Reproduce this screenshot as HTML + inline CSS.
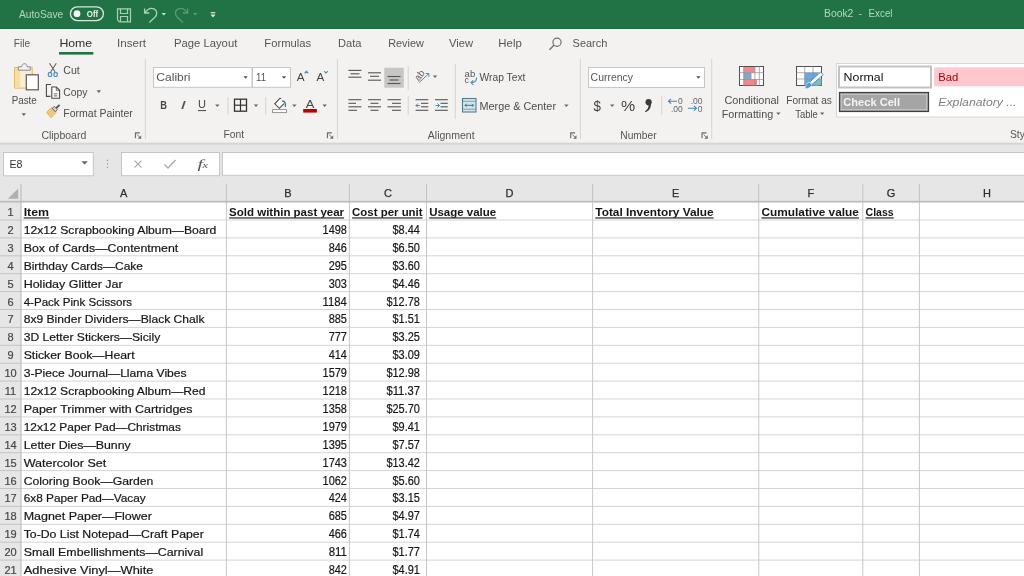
<!DOCTYPE html>
<html><head><meta charset="utf-8"><title>Book2 - Excel</title>
<style>html,body{margin:0;padding:0;width:1024px;height:576px;overflow:hidden;background:#fff}
svg{display:block;will-change:transform;font-family:"Liberation Sans",sans-serif}</style></head>
<body><svg width="1024" height="576" viewBox="0 0 1024 576">
<rect x="0" y="0" width="1024" height="576" fill="#ffffff"/>
<rect x="0" y="0" width="1024" height="29" fill="#217346"/>
<rect x="0" y="27.9" width="1024" height="1.1" fill="#1e6a40"/>
<rect x="0" y="29" width="1024" height="1.1" fill="#e6f2ea"/>
<rect x="0" y="30.1" width="1024" height="112.6" fill="#f3f2f1"/>
<rect x="0" y="142.7" width="1024" height="59.4" fill="#e6e6e6"/>
<rect x="0" y="142.7" width="1024" height="1.2" fill="#d2d2d2"/>
<rect x="0" y="143.9" width="1024" height="1.2" fill="#dcdcdc"/>
<text x="19" y="17.6" font-size="10.6" fill="#b3d8bd" textLength="44.3" lengthAdjust="spacingAndGlyphs">AutoSave</text>
<rect x="70.4" y="6.8" width="33" height="13.8" fill="none" stroke="#d5e9db" stroke-width="1.3" rx="6.9"/>
<circle cx="77" cy="13.7" r="3.4" fill="#eef7f1"/>
<text x="86.8" y="16.9" font-size="9" fill="#e6f3ea" font-weight="bold" textLength="11.4" lengthAdjust="spacingAndGlyphs">Off</text>
<path d="M117.5 8.8H130.5V21.8H119.5L117.5 19.8Z" fill="none" stroke="#a8d2b5" stroke-width="1.2"/>
<path d="M120.5 8.8V13.5H127.5V8.8" fill="none" stroke="#a8d2b5" stroke-width="1.2"/>
<path d="M120.5 21.8V16.5H127.5V21.8" fill="none" stroke="#a8d2b5" stroke-width="1.2"/>
<path d="M144.6 8.6V13H149.3M145.1 12.6C147.3 9.2 150.8 7.6 153.8 8.8C157.5 10.4 157.6 14.6 154.6 17.6L149.3 22.4" fill="none" stroke="#a8d2b5" stroke-width="1.3"/>
<path d="M161.6 13L166 13L163.8 15.6Z" fill="#d8ecdf"/>
<path d="M187.6 8.6V13H182.9M187.1 12.6C184.9 9.2 181.4 7.6 178.4 8.8C174.7 10.4 174.6 14.6 177.6 17.6L182.9 22.4" fill="none" stroke="#5a9c72" stroke-width="1.3"/>
<path d="M193 13L197.4 13L195.2 15.6Z" fill="#5f9e76"/>
<rect x="210.7" y="12.1" width="4.6" height="1.2" fill="#d8ecdf"/>
<path d="M210.5 14.6L215.5 14.6L213 17.6Z" fill="#d8ecdf"/>
<text x="824" y="17" font-size="10.6" fill="#b3d8bd" textLength="29.3" lengthAdjust="spacingAndGlyphs">Book2</text>
<text x="858.8" y="17" font-size="10.6" fill="#b3d8bd" textLength="3.2" lengthAdjust="spacingAndGlyphs">-</text>
<text x="868.6" y="17" font-size="10.6" fill="#b3d8bd" textLength="23.9" lengthAdjust="spacingAndGlyphs">Excel</text>
<text x="13.75" y="47" font-size="11.5" fill="#555555" textLength="16.25" lengthAdjust="spacingAndGlyphs">File</text>
<text x="59.4" y="47" font-size="11.5" fill="#303030" textLength="32.8" lengthAdjust="spacingAndGlyphs">Home</text>
<text x="117" y="47" font-size="11.5" fill="#555555" textLength="29" lengthAdjust="spacingAndGlyphs">Insert</text>
<text x="174" y="47" font-size="11.5" fill="#555555" textLength="63.3" lengthAdjust="spacingAndGlyphs">Page Layout</text>
<text x="264.3" y="47" font-size="11.5" fill="#555555" textLength="46.9" lengthAdjust="spacingAndGlyphs">Formulas</text>
<text x="338" y="47" font-size="11.5" fill="#555555" textLength="23.5" lengthAdjust="spacingAndGlyphs">Data</text>
<text x="388.2" y="47" font-size="11.5" fill="#555555" textLength="35.6" lengthAdjust="spacingAndGlyphs">Review</text>
<text x="449" y="47" font-size="11.5" fill="#555555" textLength="24" lengthAdjust="spacingAndGlyphs">View</text>
<text x="498.3" y="47" font-size="11.5" fill="#555555" textLength="23.5" lengthAdjust="spacingAndGlyphs">Help</text>
<text x="572.6" y="47" font-size="11.5" fill="#555555" textLength="34.7" lengthAdjust="spacingAndGlyphs">Search</text>
<rect x="59" y="52" width="34.3" height="2.6" fill="#217346"/>
<circle cx="557" cy="42.2" r="4.1" fill="none" stroke="#707070" stroke-width="1.2"/>
<line x1="554.1" y1="45.1" x2="549.5" y2="49.7" stroke="#707070" stroke-width="1.4"/>
<path d="M14.6 67.4H32.2V88.1H14.6Z" fill="#fbeed0" stroke="#dcb45e" stroke-width="1"/>
<rect x="15.2" y="68" width="5" height="19.5" fill="#f5dfa6"/>
<path d="M18.3 70.2V66.8H21.6C21.8 64.9 22.8 63.7 24.4 63.7C26 63.7 27 64.9 27.2 66.8H30.3V70.2Z" fill="#f3f2f1" stroke="#8a8a8a" stroke-width="1"/>
<rect x="26.3" y="74.8" width="12" height="15" fill="#ffffff" stroke="#595959" stroke-width="1.2"/>
<text x="11.7" y="103.7" font-size="10.3" fill="#4d4d4d" textLength="25" lengthAdjust="spacingAndGlyphs">Paste</text>
<path d="M21.6 113.3L26 113.3L23.8 115.9Z" fill="#666"/>
<path d="M49.5 63.3L55 71.8M56.3 63.3L50.8 71.8" fill="none" stroke="#606060" stroke-width="1.1"/>
<ellipse cx="50" cy="74.4" rx="1.7" ry="2.1" fill="none" stroke="#4a90c8" stroke-width="1.2"/>
<ellipse cx="55.6" cy="74.4" rx="1.7" ry="2.1" fill="none" stroke="#4a90c8" stroke-width="1.2"/>
<text x="63.3" y="74.4" font-size="10.3" fill="#4d4d4d" textLength="16.4" lengthAdjust="spacingAndGlyphs">Cut</text>
<path d="M51 84.5H46.4V96.4H50.5" fill="none" stroke="#4a4a4a" stroke-width="1.1"/>
<path d="M51.8 87H56.3L59.6 90.3V98.2H51.8Z" fill="#ffffff" stroke="#4a4a4a" stroke-width="1.1"/>
<path d="M56.3 87V90.3H59.6" fill="none" stroke="#4a4a4a" stroke-width="0.8"/>
<line x1="53.8" y1="93.9" x2="57.3" y2="93.9" stroke="#555" stroke-width="0.9"/>
<line x1="53.8" y1="95.9" x2="57.3" y2="95.9" stroke="#555" stroke-width="0.9"/>
<text x="63.3" y="95.8" font-size="10.3" fill="#4d4d4d" textLength="24.2" lengthAdjust="spacingAndGlyphs">Copy</text>
<path d="M96.6 90.3L101 90.3L98.8 92.9Z" fill="#666"/>
<path d="M46.4 112.2L51.7 107.6L56 112.6L51 117.6Z" fill="#f3cf8e" stroke="#d9a24e" stroke-width="0.8"/>
<path d="M48.2 113.9L52.8 109.6M49.6 115.6L54.3 111.1" fill="none" stroke="#d9a24e" stroke-width="0.6"/>
<path d="M52.2 108.2L54.4 106.4L57.3 109.6L55.5 111.9Z" fill="#d8d8d8" stroke="#5a5a5a" stroke-width="0.9"/>
<path d="M56 108.2L59.6 105" fill="none" stroke="#5a5a5a" stroke-width="1.9"/>
<text x="63.3" y="117" font-size="10.3" fill="#4d4d4d" textLength="69.5" lengthAdjust="spacingAndGlyphs">Format Painter</text>
<text x="41.4" y="138.8" font-size="10.3" fill="#555" textLength="44.85" lengthAdjust="spacingAndGlyphs">Clipboard</text>
<path d="M135.4 138.3V132.9M134.9 132.9H139.8" fill="none" stroke="#6a6a6a" stroke-width="1.1"/>
<path d="M137 134.5L139.8 137.3" fill="none" stroke="#6a6a6a" stroke-width="0.9"/>
<path d="M141.2 135.3V138.7H137.8Z" fill="#6a6a6a"/>
<line x1="145.3" y1="59" x2="145.3" y2="139" stroke="#d4d4d4" stroke-width="1"/>
<rect x="153.5" y="67.5" width="98.5" height="19.8" fill="#ffffff" stroke="#c6c6c6" stroke-width="1"/>
<rect x="252.5" y="67.5" width="38" height="19.8" fill="#ffffff" stroke="#c6c6c6" stroke-width="1"/>
<text x="156.3" y="81.4" font-size="10.8" fill="#555" textLength="34.2" lengthAdjust="spacingAndGlyphs">Calibri</text>
<path d="M243.4 76.2L247.8 76.2L245.6 78.8Z" fill="#555"/>
<text x="256" y="81.4" font-size="10.8" fill="#555" textLength="10" lengthAdjust="spacingAndGlyphs">11</text>
<path d="M281.8 76.2L286.2 76.2L284 78.8Z" fill="#555"/>
<text x="296.8" y="81.2" font-size="11.2" fill="#444" textLength="7.8" lengthAdjust="spacingAndGlyphs">A</text>
<path d="M304.6 73.3L306.4 71.1L308.2 73.3" fill="none" stroke="#5b8fa8" stroke-width="1.2"/>
<text x="316.5" y="81.2" font-size="11.2" fill="#444" textLength="7.8" lengthAdjust="spacingAndGlyphs">A</text>
<path d="M324.2 71.1L326 73.2L327.8 71.1" fill="none" stroke="#5b8fa8" stroke-width="1.2"/>
<text x="160.2" y="109.3" font-size="11.5" fill="#444" font-weight="bold" textLength="6.7" lengthAdjust="spacingAndGlyphs">B</text>
<text x="180.5" y="109.3" font-size="11.5" fill="#555" font-style="italic" textLength="5.5" lengthAdjust="spacingAndGlyphs">I</text>
<text x="198" y="108.3" font-size="10.5" fill="#444" textLength="8" lengthAdjust="spacingAndGlyphs">U</text>
<line x1="198" y1="110.6" x2="206" y2="110.6" stroke="#444" stroke-width="1"/>
<path d="M215.1 104.5L219.5 104.5L217.3 107.1Z" fill="#666"/>
<line x1="228" y1="97" x2="228" y2="114.6" stroke="#d4d4d4" stroke-width="1"/>
<rect x="234.5" y="99.2" width="12" height="12" fill="none" stroke="#333" stroke-width="1.3"/>
<line x1="240.5" y1="99.2" x2="240.5" y2="111.2" stroke="#333" stroke-width="1.2"/>
<line x1="234.5" y1="105.2" x2="246.5" y2="105.2" stroke="#333" stroke-width="1.2"/>
<path d="M253.8 104.5L258.2 104.5L256 107.1Z" fill="#666"/>
<line x1="265.7" y1="97" x2="265.7" y2="114.6" stroke="#d4d4d4" stroke-width="1"/>
<path d="M281.2 98.8L279.8 98.3L274.8 103.8L279.4 108.3L284 103.6" fill="#fafafa" stroke="#4a4a4a" stroke-width="1.1"/>
<path d="M282.2 101C284.6 100.8 286 103.2 285.3 106.8" fill="none" stroke="#3a6f85" stroke-width="1.3"/>
<rect x="272.6" y="109.6" width="13.9" height="3" fill="#ffffff" stroke="#8a8a8a" stroke-width="0.9"/>
<path d="M292.2 104.5L296.6 104.5L294.4 107.1Z" fill="#666"/>
<text x="305.8" y="107.6" font-size="11.6" fill="#4a4a4a" textLength="8.6" lengthAdjust="spacingAndGlyphs">A</text>
<rect x="303.2" y="109" width="13.7" height="3.6" fill="#c00000"/>
<path d="M322.5 104.5L326.9 104.5L324.7 107.1Z" fill="#666"/>
<text x="223.5" y="138.4" font-size="10.3" fill="#555" textLength="20.7" lengthAdjust="spacingAndGlyphs">Font</text>
<path d="M327.4 138.3V132.9M326.9 132.9H331.8" fill="none" stroke="#6a6a6a" stroke-width="1.1"/>
<path d="M329 134.5L331.8 137.3" fill="none" stroke="#6a6a6a" stroke-width="0.9"/>
<path d="M333.2 135.3V138.7H329.8Z" fill="#6a6a6a"/>
<line x1="337.4" y1="59" x2="337.4" y2="139" stroke="#d4d4d4" stroke-width="1"/>
<line x1="348.4" y1="70.4" x2="361.4" y2="70.4" stroke="#555" stroke-width="1.1"/>
<line x1="350.5" y1="73.8" x2="359.5" y2="73.8" stroke="#555" stroke-width="1.1"/>
<line x1="348.4" y1="77.2" x2="361.4" y2="77.2" stroke="#555" stroke-width="1.1"/>
<line x1="368" y1="72.8" x2="381" y2="72.8" stroke="#555" stroke-width="1.1"/>
<line x1="370" y1="76.3" x2="379" y2="76.3" stroke="#555" stroke-width="1.1"/>
<line x1="368" y1="80.2" x2="381" y2="80.2" stroke="#555" stroke-width="1.1"/>
<rect x="384.3" y="67.7" width="19.5" height="20" fill="#c8c6c4"/>
<line x1="387.5" y1="76.5" x2="400.5" y2="76.5" stroke="#555" stroke-width="1.1"/>
<line x1="389.5" y1="80" x2="398.5" y2="80" stroke="#555" stroke-width="1.1"/>
<line x1="387.5" y1="83.5" x2="400.5" y2="83.5" stroke="#555" stroke-width="1.1"/>
<line x1="408.2" y1="66" x2="408.2" y2="90" stroke="#d4d4d4" stroke-width="1"/>
<text x="413.3" y="79.2" font-size="9.5" fill="#555" transform="rotate(-52 418.3 74.7)">ab</text>
<path d="M419.2 82.5L428.8 73.6M425.6 73.5H428.9V76.8" fill="none" stroke="#4a8fb8" stroke-width="1"/>
<path d="M432.8 75.5L437.2 75.5L435 78.1Z" fill="#666"/>
<line x1="455.3" y1="64" x2="455.3" y2="119" stroke="#d4d4d4" stroke-width="1"/>
<text x="464.6" y="76.7" font-size="9.5" fill="#555" textLength="10.6" lengthAdjust="spacingAndGlyphs">ab</text>
<text x="464.6" y="83" font-size="9.5" fill="#555" textLength="4.4" lengthAdjust="spacingAndGlyphs">c</text>
<path d="M476.5 77.5C476.8 80.5 475 82.6 471.2 82.6M473.3 80.4L471 82.6L473.3 84.8" fill="none" stroke="#4a8fb8" stroke-width="1.1"/>
<text x="479.5" y="81.2" font-size="10.3" fill="#4d4d4d" textLength="45.9" lengthAdjust="spacingAndGlyphs">Wrap Text</text>
<line x1="348.4" y1="99.7" x2="361.4" y2="99.7" stroke="#555" stroke-width="1.1"/>
<line x1="348.4" y1="103.3" x2="356" y2="103.3" stroke="#555" stroke-width="1.1"/>
<line x1="348.4" y1="106.8" x2="361.4" y2="106.8" stroke="#555" stroke-width="1.1"/>
<line x1="348.4" y1="110.3" x2="357" y2="110.3" stroke="#555" stroke-width="1.1"/>
<line x1="368" y1="99.7" x2="381" y2="99.7" stroke="#555" stroke-width="1.1"/>
<line x1="370.5" y1="103.3" x2="378.5" y2="103.3" stroke="#555" stroke-width="1.1"/>
<line x1="368" y1="106.8" x2="381" y2="106.8" stroke="#555" stroke-width="1.1"/>
<line x1="370.5" y1="110.3" x2="378.5" y2="110.3" stroke="#555" stroke-width="1.1"/>
<line x1="387.5" y1="99.7" x2="400.9" y2="99.7" stroke="#555" stroke-width="1.1"/>
<line x1="392" y1="103.3" x2="400.9" y2="103.3" stroke="#555" stroke-width="1.1"/>
<line x1="387.5" y1="106.8" x2="400.9" y2="106.8" stroke="#555" stroke-width="1.1"/>
<line x1="392" y1="110.3" x2="400.9" y2="110.3" stroke="#555" stroke-width="1.1"/>
<line x1="408.2" y1="96" x2="408.2" y2="115" stroke="#d4d4d4" stroke-width="1"/>
<line x1="415.6" y1="99.7" x2="428.3" y2="99.7" stroke="#555" stroke-width="1.1"/>
<line x1="421" y1="103.3" x2="428.3" y2="103.3" stroke="#555" stroke-width="1.1"/>
<line x1="421" y1="106.8" x2="428.3" y2="106.8" stroke="#555" stroke-width="1.1"/>
<line x1="415.6" y1="110.3" x2="428.3" y2="110.3" stroke="#555" stroke-width="1.1"/>
<path d="M420 105.5H416M418 103.5L416 105.5L418 107.5" fill="none" stroke="#3c8bc4" stroke-width="1"/>
<line x1="435" y1="99.7" x2="447.8" y2="99.7" stroke="#555" stroke-width="1.1"/>
<line x1="440.5" y1="103.3" x2="447.8" y2="103.3" stroke="#555" stroke-width="1.1"/>
<line x1="440.5" y1="106.8" x2="447.8" y2="106.8" stroke="#555" stroke-width="1.1"/>
<line x1="435" y1="110.3" x2="447.8" y2="110.3" stroke="#555" stroke-width="1.1"/>
<path d="M435.5 105.5H439.5M437.5 103.5L439.5 105.5L437.5 107.5" fill="none" stroke="#3c8bc4" stroke-width="1"/>
<rect x="462.5" y="98.5" width="13.5" height="13.5" fill="#cfe6ee" stroke="#587c86" stroke-width="1.1"/>
<line x1="462.5" y1="101.3" x2="476" y2="101.3" stroke="#6f8f98" stroke-width="0.8"/>
<line x1="462.5" y1="109.2" x2="476" y2="109.2" stroke="#6f8f98" stroke-width="0.8"/>
<path d="M465 105.3H473.5M466.5 103.8L465 105.3L466.5 106.8M472 103.8L473.5 105.3L472 106.8" fill="none" stroke="#3a7587" stroke-width="1"/>
<text x="479.5" y="110.2" font-size="10.3" fill="#4d4d4d" textLength="76.5" lengthAdjust="spacingAndGlyphs">Merge &amp; Center</text>
<path d="M564.2 104.5L568.6 104.5L566.4 107.1Z" fill="#666"/>
<text x="427.8" y="138.6" font-size="10.3" fill="#555" textLength="46.8" lengthAdjust="spacingAndGlyphs">Alignment</text>
<path d="M570.7 138.3V132.9M570.2 132.9H575.1" fill="none" stroke="#6a6a6a" stroke-width="1.1"/>
<path d="M572.3 134.5L575.1 137.3" fill="none" stroke="#6a6a6a" stroke-width="0.9"/>
<path d="M576.5 135.3V138.7H573.1Z" fill="#6a6a6a"/>
<line x1="580.4" y1="59" x2="580.4" y2="139" stroke="#d4d4d4" stroke-width="1"/>
<rect x="588.5" y="67.5" width="116" height="20" fill="#ffffff" stroke="#c6c6c6" stroke-width="1"/>
<text x="590.6" y="81.2" font-size="10.5" fill="#555" textLength="42.5" lengthAdjust="spacingAndGlyphs">Currency</text>
<path d="M696.2 76.2L700.6 76.2L698.4 78.8Z" fill="#555"/>
<text x="593.4" y="110.5" font-size="14" fill="#444" textLength="7.4" lengthAdjust="spacingAndGlyphs">$</text>
<path d="M610 104.5L614.4 104.5L612.2 107.1Z" fill="#666"/>
<text x="621" y="110.5" font-size="14" fill="#444" textLength="14.2" lengthAdjust="spacingAndGlyphs">%</text>
<circle cx="648.6" cy="102.2" r="3.1" fill="#3a3a3a"/>
<path d="M650.8 103.5C651.5 107 649.5 110.5 645.5 112.3L645 111.2C647.5 109.8 648.8 107.5 648.5 105Z" fill="#3a3a3a"/>
<line x1="661.7" y1="96" x2="661.7" y2="115" stroke="#d4d4d4" stroke-width="1"/>
<text x="682.8" y="104.3" font-size="8.5" fill="#666" text-anchor="end">0</text>
<text x="682.8" y="111.5" font-size="8.5" fill="#666" text-anchor="end">.00</text>
<path d="M677 101.2H668.5M671 98.8L668.5 101.2L671 103.6" fill="none" stroke="#3c8bc4" stroke-width="1.1"/>
<text x="702.5" y="104.3" font-size="8.5" fill="#666" text-anchor="end">.00</text>
<text x="702.5" y="111.5" font-size="8.5" fill="#666" text-anchor="end">0</text>
<path d="M688 108.3H696.5M694 105.9L696.5 108.3L694 110.7" fill="none" stroke="#3c8bc4" stroke-width="1.1"/>
<text x="620.3" y="138.6" font-size="10.3" fill="#555" textLength="36.3" lengthAdjust="spacingAndGlyphs">Number</text>
<path d="M702 138.3V132.9M701.5 132.9H706.4" fill="none" stroke="#6a6a6a" stroke-width="1.1"/>
<path d="M703.6 134.5L706.4 137.3" fill="none" stroke="#6a6a6a" stroke-width="0.9"/>
<path d="M707.8 135.3V138.7H704.4Z" fill="#6a6a6a"/>
<line x1="711.7" y1="59" x2="711.7" y2="139" stroke="#d4d4d4" stroke-width="1"/>
<rect x="739.5" y="66.5" width="24" height="19" fill="#ffffff" stroke="#505050" stroke-width="1"/>
<rect x="743.7" y="67" width="11.2" height="5.7" fill="#f4878c"/>
<rect x="743.7" y="79.5" width="13.3" height="5.8" fill="#f4878c"/>
<rect x="743.7" y="72.7" width="7.8" height="6.8" fill="#7fa9c6"/>
<line x1="743.7" y1="66.5" x2="743.7" y2="85.5" stroke="#8a8a8a" stroke-width="0.7"/>
<line x1="754.9" y1="66.5" x2="754.9" y2="85.5" stroke="#8a8a8a" stroke-width="0.7"/>
<line x1="759.3" y1="66.5" x2="759.3" y2="85.5" stroke="#8a8a8a" stroke-width="0.7"/>
<line x1="739.5" y1="72.7" x2="763.5" y2="72.7" stroke="#8a8a8a" stroke-width="0.7"/>
<line x1="739.5" y1="79.5" x2="763.5" y2="79.5" stroke="#8a8a8a" stroke-width="0.7"/>
<text x="724.4" y="103.7" font-size="10.3" fill="#4d4d4d" textLength="54.6" lengthAdjust="spacingAndGlyphs">Conditional</text>
<text x="721.7" y="117.7" font-size="10.3" fill="#4d4d4d" textLength="51.6" lengthAdjust="spacingAndGlyphs">Formatting</text>
<path d="M776.2 112.5L780.6 112.5L778.4 115.1Z" fill="#666"/>
<rect x="796.5" y="66.5" width="25" height="19" fill="#ffffff" stroke="#505050" stroke-width="1"/>
<rect x="804.7" y="72.7" width="13.5" height="12.8" fill="#63abe8"/>
<rect x="813" y="79" width="8.5" height="6.5" fill="#86b6c0"/>
<line x1="804.7" y1="66.5" x2="804.7" y2="85.5" stroke="#8a8a8a" stroke-width="0.7"/>
<line x1="813" y1="66.5" x2="813" y2="85.5" stroke="#8a8a8a" stroke-width="0.7"/>
<line x1="796.5" y1="72.7" x2="821.5" y2="72.7" stroke="#8a8a8a" stroke-width="0.7"/>
<line x1="796.5" y1="79" x2="821.5" y2="79" stroke="#8a8a8a" stroke-width="0.7"/>
<path d="M820.5 72.2L823.3 74.6L812 84.5L809.5 82.2Z" fill="#ffffff" stroke="#3c8bc4" stroke-width="0.9"/>
<path d="M809.3 82.4L811.8 84.7C811 87.5 808 89 804.2 88.6C805.5 87.5 805.8 85.8 806.6 84.3C807.3 83 808.3 82.5 809.3 82.4Z" fill="#4a9ad8" stroke="#ffffff" stroke-width="0.6"/>
<text x="786.25" y="103.7" font-size="10.3" fill="#4d4d4d" textLength="45.65" lengthAdjust="spacingAndGlyphs">Format as</text>
<text x="795.2" y="117.7" font-size="10.3" fill="#4d4d4d" textLength="22.6" lengthAdjust="spacingAndGlyphs">Table</text>
<path d="M820 112.5L824.4 112.5L822.2 115.1Z" fill="#666"/>
<rect x="836.5" y="63.5" width="200" height="53.5" fill="#ffffff" stroke="#d6d6d6" stroke-width="1"/>
<rect x="839" y="66.5" width="92" height="21" fill="#ffffff" stroke="#c2c2c2" stroke-width="2"/>
<text x="843.6" y="80.6" font-size="11.5" fill="#111" textLength="39.8" lengthAdjust="spacingAndGlyphs">Normal</text>
<rect x="934.2" y="67.4" width="100" height="18.9" fill="#ffc7ce"/>
<text x="938.3" y="80.6" font-size="11.5" fill="#9c0006" textLength="20.1" lengthAdjust="spacingAndGlyphs">Bad</text>
<rect x="839.5" y="92.5" width="89" height="19" fill="#a5a5a5" stroke="#3f3f3f" stroke-width="1.2"/>
<rect x="841.3" y="94.3" width="85.4" height="15.4" fill="none" stroke="#d4d4d4" stroke-width="0.6"/>
<text x="843.3" y="106.3" font-size="11.3" fill="#f4f4f4" font-weight="bold" textLength="56.7" lengthAdjust="spacingAndGlyphs">Check Cell</text>
<text x="938.3" y="106.3" font-size="11.3" fill="#7f7f7f" font-style="italic" textLength="78.2" lengthAdjust="spacingAndGlyphs">Explanatory ...</text>
<text x="1010" y="138.4" font-size="10.3" fill="#555">Styles</text>
<rect x="3.5" y="152.5" width="89.8" height="23.3" fill="#ffffff" stroke="#c6c6c6" stroke-width="1"/>
<text x="9.5" y="168.3" font-size="11" fill="#333" textLength="13" lengthAdjust="spacingAndGlyphs">E8</text>
<path d="M81.35 161.15L87.85 161.15L84.6 164.45Z" fill="#666"/>
<rect x="106.9" y="159.75" width="1.1" height="1.1" fill="#8a8a8a"/>
<rect x="106.9" y="163.25" width="1.1" height="1.1" fill="#8a8a8a"/>
<rect x="106.9" y="166.75" width="1.1" height="1.1" fill="#8a8a8a"/>
<rect x="121.5" y="152.5" width="98" height="23.2" fill="#ffffff" stroke="#c6c6c6" stroke-width="1"/>
<path d="M134.5 160.7L141.5 167.7M141.5 160.7L134.5 167.7" fill="none" stroke="#a8a8a8" stroke-width="1.2"/>
<path d="M164.5 164.5L168 168L175.5 160" fill="none" stroke="#a8a8a8" stroke-width="1.4"/>
<text x="197.5" y="168" font-size="12" fill="#555" font-family="Liberation Serif" font-style="italic" textLength="5.5" lengthAdjust="spacingAndGlyphs">f</text>
<text x="202.5" y="168" font-size="9" fill="#555" font-family="Liberation Serif" font-style="italic" textLength="5.5" lengthAdjust="spacingAndGlyphs">x</text>
<rect x="222.5" y="152.5" width="820" height="22.8" fill="#ffffff" stroke="#c6c6c6" stroke-width="1"/>
<rect x="0" y="202.1" width="21" height="373.9" fill="#e6e6e6"/>
<line x1="21" y1="220" x2="1024" y2="220" stroke="#d4d4d4" stroke-width="1"/>
<line x1="0" y1="220" x2="21" y2="220" stroke="#c4c4c4" stroke-width="1"/>
<line x1="21" y1="237.9" x2="1024" y2="237.9" stroke="#d4d4d4" stroke-width="1"/>
<line x1="0" y1="237.9" x2="21" y2="237.9" stroke="#c4c4c4" stroke-width="1"/>
<line x1="21" y1="255.8" x2="1024" y2="255.8" stroke="#d4d4d4" stroke-width="1"/>
<line x1="0" y1="255.8" x2="21" y2="255.8" stroke="#c4c4c4" stroke-width="1"/>
<line x1="21" y1="273.7" x2="1024" y2="273.7" stroke="#d4d4d4" stroke-width="1"/>
<line x1="0" y1="273.7" x2="21" y2="273.7" stroke="#c4c4c4" stroke-width="1"/>
<line x1="21" y1="291.6" x2="1024" y2="291.6" stroke="#d4d4d4" stroke-width="1"/>
<line x1="0" y1="291.6" x2="21" y2="291.6" stroke="#c4c4c4" stroke-width="1"/>
<line x1="21" y1="309.5" x2="1024" y2="309.5" stroke="#d4d4d4" stroke-width="1"/>
<line x1="0" y1="309.5" x2="21" y2="309.5" stroke="#c4c4c4" stroke-width="1"/>
<line x1="21" y1="327.4" x2="1024" y2="327.4" stroke="#d4d4d4" stroke-width="1"/>
<line x1="0" y1="327.4" x2="21" y2="327.4" stroke="#c4c4c4" stroke-width="1"/>
<line x1="21" y1="345.3" x2="1024" y2="345.3" stroke="#d4d4d4" stroke-width="1"/>
<line x1="0" y1="345.3" x2="21" y2="345.3" stroke="#c4c4c4" stroke-width="1"/>
<line x1="21" y1="363.2" x2="1024" y2="363.2" stroke="#d4d4d4" stroke-width="1"/>
<line x1="0" y1="363.2" x2="21" y2="363.2" stroke="#c4c4c4" stroke-width="1"/>
<line x1="21" y1="381.1" x2="1024" y2="381.1" stroke="#d4d4d4" stroke-width="1"/>
<line x1="0" y1="381.1" x2="21" y2="381.1" stroke="#c4c4c4" stroke-width="1"/>
<line x1="21" y1="399" x2="1024" y2="399" stroke="#d4d4d4" stroke-width="1"/>
<line x1="0" y1="399" x2="21" y2="399" stroke="#c4c4c4" stroke-width="1"/>
<line x1="21" y1="416.9" x2="1024" y2="416.9" stroke="#d4d4d4" stroke-width="1"/>
<line x1="0" y1="416.9" x2="21" y2="416.9" stroke="#c4c4c4" stroke-width="1"/>
<line x1="21" y1="434.8" x2="1024" y2="434.8" stroke="#d4d4d4" stroke-width="1"/>
<line x1="0" y1="434.8" x2="21" y2="434.8" stroke="#c4c4c4" stroke-width="1"/>
<line x1="21" y1="452.7" x2="1024" y2="452.7" stroke="#d4d4d4" stroke-width="1"/>
<line x1="0" y1="452.7" x2="21" y2="452.7" stroke="#c4c4c4" stroke-width="1"/>
<line x1="21" y1="470.6" x2="1024" y2="470.6" stroke="#d4d4d4" stroke-width="1"/>
<line x1="0" y1="470.6" x2="21" y2="470.6" stroke="#c4c4c4" stroke-width="1"/>
<line x1="21" y1="488.5" x2="1024" y2="488.5" stroke="#d4d4d4" stroke-width="1"/>
<line x1="0" y1="488.5" x2="21" y2="488.5" stroke="#c4c4c4" stroke-width="1"/>
<line x1="21" y1="506.4" x2="1024" y2="506.4" stroke="#d4d4d4" stroke-width="1"/>
<line x1="0" y1="506.4" x2="21" y2="506.4" stroke="#c4c4c4" stroke-width="1"/>
<line x1="21" y1="524.3" x2="1024" y2="524.3" stroke="#d4d4d4" stroke-width="1"/>
<line x1="0" y1="524.3" x2="21" y2="524.3" stroke="#c4c4c4" stroke-width="1"/>
<line x1="21" y1="542.2" x2="1024" y2="542.2" stroke="#d4d4d4" stroke-width="1"/>
<line x1="0" y1="542.2" x2="21" y2="542.2" stroke="#c4c4c4" stroke-width="1"/>
<line x1="21" y1="560.1" x2="1024" y2="560.1" stroke="#d4d4d4" stroke-width="1"/>
<line x1="0" y1="560.1" x2="21" y2="560.1" stroke="#c4c4c4" stroke-width="1"/>
<line x1="226.4" y1="202.1" x2="226.4" y2="576" stroke="#c8c8c8" stroke-width="1"/>
<line x1="226.4" y1="184" x2="226.4" y2="202.1" stroke="#c2c2c2" stroke-width="1"/>
<line x1="349.4" y1="202.1" x2="349.4" y2="576" stroke="#c8c8c8" stroke-width="1"/>
<line x1="349.4" y1="184" x2="349.4" y2="202.1" stroke="#c2c2c2" stroke-width="1"/>
<line x1="426.5" y1="202.1" x2="426.5" y2="576" stroke="#c8c8c8" stroke-width="1"/>
<line x1="426.5" y1="184" x2="426.5" y2="202.1" stroke="#c2c2c2" stroke-width="1"/>
<line x1="592.6" y1="202.1" x2="592.6" y2="576" stroke="#c8c8c8" stroke-width="1"/>
<line x1="592.6" y1="184" x2="592.6" y2="202.1" stroke="#c2c2c2" stroke-width="1"/>
<line x1="758.75" y1="202.1" x2="758.75" y2="576" stroke="#c8c8c8" stroke-width="1"/>
<line x1="758.75" y1="184" x2="758.75" y2="202.1" stroke="#c2c2c2" stroke-width="1"/>
<line x1="862.8" y1="202.1" x2="862.8" y2="576" stroke="#c8c8c8" stroke-width="1"/>
<line x1="862.8" y1="184" x2="862.8" y2="202.1" stroke="#c2c2c2" stroke-width="1"/>
<line x1="919.4" y1="202.1" x2="919.4" y2="576" stroke="#c8c8c8" stroke-width="1"/>
<line x1="919.4" y1="184" x2="919.4" y2="202.1" stroke="#c2c2c2" stroke-width="1"/>
<rect x="0" y="200.8" width="1024" height="1.8" fill="#bdbdbd"/>
<line x1="21" y1="184" x2="21" y2="576" stroke="#bfbfbf" stroke-width="1.2"/>
<path d="M18.2 188.5V198.8H7.8Z" fill="#b0b0b0"/>
<text x="123.7" y="196.7" font-size="11" fill="#2e2e2e" text-anchor="middle" stroke="#2e2e2e" stroke-width="0.25">A</text>
<text x="287.9" y="196.7" font-size="11" fill="#2e2e2e" text-anchor="middle" stroke="#2e2e2e" stroke-width="0.25">B</text>
<text x="387.95" y="196.7" font-size="11" fill="#2e2e2e" text-anchor="middle" stroke="#2e2e2e" stroke-width="0.25">C</text>
<text x="509.55" y="196.7" font-size="11" fill="#2e2e2e" text-anchor="middle" stroke="#2e2e2e" stroke-width="0.25">D</text>
<text x="675.67" y="196.7" font-size="11" fill="#2e2e2e" text-anchor="middle" stroke="#2e2e2e" stroke-width="0.25">E</text>
<text x="810.77" y="196.7" font-size="11" fill="#2e2e2e" text-anchor="middle" stroke="#2e2e2e" stroke-width="0.25">F</text>
<text x="891.1" y="196.7" font-size="11" fill="#2e2e2e" text-anchor="middle" stroke="#2e2e2e" stroke-width="0.25">G</text>
<text x="987" y="196.7" font-size="11" fill="#2e2e2e" text-anchor="middle" stroke="#2e2e2e" stroke-width="0.25">H</text>
<text x="10.5" y="216" font-size="11" fill="#474747" text-anchor="middle" stroke="#474747" stroke-width="0.2">1</text>
<text x="23.7" y="216" font-size="11.6" fill="#161616" font-weight="bold" textLength="25.4" lengthAdjust="spacingAndGlyphs">Item</text>
<rect x="23.7" y="217.3" width="25.4" height="1.3" fill="#3a3a3a"/>
<text x="229.1" y="216" font-size="11.6" fill="#161616" font-weight="bold" textLength="115" lengthAdjust="spacingAndGlyphs">Sold within past year</text>
<rect x="229.1" y="217.3" width="115" height="1.3" fill="#3a3a3a"/>
<text x="352.1" y="216" font-size="11.6" fill="#161616" font-weight="bold" textLength="70.5" lengthAdjust="spacingAndGlyphs">Cost per unit</text>
<rect x="352.1" y="217.3" width="70.5" height="1.3" fill="#3a3a3a"/>
<text x="429.2" y="216" font-size="11.6" fill="#161616" font-weight="bold" textLength="67" lengthAdjust="spacingAndGlyphs">Usage value</text>
<rect x="429.2" y="217.3" width="67" height="1.3" fill="#3a3a3a"/>
<text x="595.3" y="216" font-size="11.6" fill="#161616" font-weight="bold" textLength="118.4" lengthAdjust="spacingAndGlyphs">Total Inventory Value</text>
<rect x="595.3" y="217.3" width="118.4" height="1.3" fill="#3a3a3a"/>
<text x="761.45" y="216" font-size="11.6" fill="#161616" font-weight="bold" textLength="97.5" lengthAdjust="spacingAndGlyphs">Cumulative value</text>
<rect x="761.45" y="217.3" width="97.5" height="1.3" fill="#3a3a3a"/>
<text x="865.5" y="216" font-size="11.6" fill="#161616" font-weight="bold" textLength="28.2" lengthAdjust="spacingAndGlyphs">Class</text>
<rect x="865.5" y="217.3" width="28.2" height="1.3" fill="#3a3a3a"/>
<text x="10.5" y="233.9" font-size="11" fill="#474747" text-anchor="middle" stroke="#474747" stroke-width="0.2">2</text>
<text x="23.7" y="233.9" font-size="11.6" fill="#161616" textLength="192.7" lengthAdjust="spacingAndGlyphs" stroke="#161616" stroke-width="0.2">12x12 Scrapbooking Album—Board</text>
<text x="322.58" y="233.9" font-size="12" fill="#161616" textLength="24.32" lengthAdjust="spacingAndGlyphs" stroke="#161616" stroke-width="0.2">1498</text>
<text x="392.56" y="233.9" font-size="12" fill="#161616" textLength="27.34" lengthAdjust="spacingAndGlyphs" stroke="#161616" stroke-width="0.2">$8.44</text>
<text x="10.5" y="251.8" font-size="11" fill="#474747" text-anchor="middle" stroke="#474747" stroke-width="0.2">3</text>
<text x="23.7" y="251.8" font-size="11.6" fill="#161616" textLength="154.6" lengthAdjust="spacingAndGlyphs" stroke="#161616" stroke-width="0.2">Box of Cards—Contentment</text>
<text x="328.66" y="251.8" font-size="12" fill="#161616" textLength="18.24" lengthAdjust="spacingAndGlyphs" stroke="#161616" stroke-width="0.2">846</text>
<text x="392.56" y="251.8" font-size="12" fill="#161616" textLength="27.34" lengthAdjust="spacingAndGlyphs" stroke="#161616" stroke-width="0.2">$6.50</text>
<text x="10.5" y="269.7" font-size="11" fill="#474747" text-anchor="middle" stroke="#474747" stroke-width="0.2">4</text>
<text x="23.7" y="269.7" font-size="11.6" fill="#161616" textLength="119.3" lengthAdjust="spacingAndGlyphs" stroke="#161616" stroke-width="0.2">Birthday Cards—Cake</text>
<text x="328.66" y="269.7" font-size="12" fill="#161616" textLength="18.24" lengthAdjust="spacingAndGlyphs" stroke="#161616" stroke-width="0.2">295</text>
<text x="392.56" y="269.7" font-size="12" fill="#161616" textLength="27.34" lengthAdjust="spacingAndGlyphs" stroke="#161616" stroke-width="0.2">$3.60</text>
<text x="10.5" y="287.6" font-size="11" fill="#474747" text-anchor="middle" stroke="#474747" stroke-width="0.2">5</text>
<text x="23.7" y="287.6" font-size="11.6" fill="#161616" textLength="99" lengthAdjust="spacingAndGlyphs" stroke="#161616" stroke-width="0.2">Holiday Glitter Jar</text>
<text x="328.66" y="287.6" font-size="12" fill="#161616" textLength="18.24" lengthAdjust="spacingAndGlyphs" stroke="#161616" stroke-width="0.2">303</text>
<text x="392.56" y="287.6" font-size="12" fill="#161616" textLength="27.34" lengthAdjust="spacingAndGlyphs" stroke="#161616" stroke-width="0.2">$4.46</text>
<text x="10.5" y="305.5" font-size="11" fill="#474747" text-anchor="middle" stroke="#474747" stroke-width="0.2">6</text>
<text x="23.7" y="305.5" font-size="11.6" fill="#161616" textLength="108.35" lengthAdjust="spacingAndGlyphs" stroke="#161616" stroke-width="0.2">4-Pack Pink Scissors</text>
<text x="322.58" y="305.5" font-size="12" fill="#161616" textLength="24.32" lengthAdjust="spacingAndGlyphs" stroke="#161616" stroke-width="0.2">1184</text>
<text x="386.48" y="305.5" font-size="12" fill="#161616" textLength="33.42" lengthAdjust="spacingAndGlyphs" stroke="#161616" stroke-width="0.2">$12.78</text>
<text x="10.5" y="323.4" font-size="11" fill="#474747" text-anchor="middle" stroke="#474747" stroke-width="0.2">7</text>
<text x="23.7" y="323.4" font-size="11.6" fill="#161616" textLength="180.85" lengthAdjust="spacingAndGlyphs" stroke="#161616" stroke-width="0.2">8x9 Binder Dividers—Black Chalk</text>
<text x="328.66" y="323.4" font-size="12" fill="#161616" textLength="18.24" lengthAdjust="spacingAndGlyphs" stroke="#161616" stroke-width="0.2">885</text>
<text x="392.56" y="323.4" font-size="12" fill="#161616" textLength="27.34" lengthAdjust="spacingAndGlyphs" stroke="#161616" stroke-width="0.2">$1.51</text>
<text x="10.5" y="341.3" font-size="11" fill="#474747" text-anchor="middle" stroke="#474747" stroke-width="0.2">8</text>
<text x="23.7" y="341.3" font-size="11.6" fill="#161616" textLength="136.5" lengthAdjust="spacingAndGlyphs" stroke="#161616" stroke-width="0.2">3D Letter Stickers—Sicily</text>
<text x="328.66" y="341.3" font-size="12" fill="#161616" textLength="18.24" lengthAdjust="spacingAndGlyphs" stroke="#161616" stroke-width="0.2">777</text>
<text x="392.56" y="341.3" font-size="12" fill="#161616" textLength="27.34" lengthAdjust="spacingAndGlyphs" stroke="#161616" stroke-width="0.2">$3.25</text>
<text x="10.5" y="359.2" font-size="11" fill="#474747" text-anchor="middle" stroke="#474747" stroke-width="0.2">9</text>
<text x="23.7" y="359.2" font-size="11.6" fill="#161616" textLength="110.85" lengthAdjust="spacingAndGlyphs" stroke="#161616" stroke-width="0.2">Sticker Book—Heart</text>
<text x="328.66" y="359.2" font-size="12" fill="#161616" textLength="18.24" lengthAdjust="spacingAndGlyphs" stroke="#161616" stroke-width="0.2">414</text>
<text x="392.56" y="359.2" font-size="12" fill="#161616" textLength="27.34" lengthAdjust="spacingAndGlyphs" stroke="#161616" stroke-width="0.2">$3.09</text>
<text x="10.5" y="377.1" font-size="11" fill="#474747" text-anchor="middle" stroke="#474747" stroke-width="0.2">10</text>
<text x="23.7" y="377.1" font-size="11.6" fill="#161616" textLength="163" lengthAdjust="spacingAndGlyphs" stroke="#161616" stroke-width="0.2">3-Piece Journal—Llama Vibes</text>
<text x="322.58" y="377.1" font-size="12" fill="#161616" textLength="24.32" lengthAdjust="spacingAndGlyphs" stroke="#161616" stroke-width="0.2">1579</text>
<text x="386.48" y="377.1" font-size="12" fill="#161616" textLength="33.42" lengthAdjust="spacingAndGlyphs" stroke="#161616" stroke-width="0.2">$12.98</text>
<text x="10.5" y="395" font-size="11" fill="#474747" text-anchor="middle" stroke="#474747" stroke-width="0.2">11</text>
<text x="23.7" y="395" font-size="11.6" fill="#161616" textLength="181.8" lengthAdjust="spacingAndGlyphs" stroke="#161616" stroke-width="0.2">12x12 Scrapbooking Album—Red</text>
<text x="322.58" y="395" font-size="12" fill="#161616" textLength="24.32" lengthAdjust="spacingAndGlyphs" stroke="#161616" stroke-width="0.2">1218</text>
<text x="386.48" y="395" font-size="12" fill="#161616" textLength="33.42" lengthAdjust="spacingAndGlyphs" stroke="#161616" stroke-width="0.2">$11.37</text>
<text x="10.5" y="412.9" font-size="11" fill="#474747" text-anchor="middle" stroke="#474747" stroke-width="0.2">12</text>
<text x="23.7" y="412.9" font-size="11.6" fill="#161616" textLength="168.8" lengthAdjust="spacingAndGlyphs" stroke="#161616" stroke-width="0.2">Paper Trimmer with Cartridges</text>
<text x="322.58" y="412.9" font-size="12" fill="#161616" textLength="24.32" lengthAdjust="spacingAndGlyphs" stroke="#161616" stroke-width="0.2">1358</text>
<text x="386.48" y="412.9" font-size="12" fill="#161616" textLength="33.42" lengthAdjust="spacingAndGlyphs" stroke="#161616" stroke-width="0.2">$25.70</text>
<text x="10.5" y="430.8" font-size="11" fill="#474747" text-anchor="middle" stroke="#474747" stroke-width="0.2">13</text>
<text x="23.7" y="430.8" font-size="11.6" fill="#161616" textLength="157.2" lengthAdjust="spacingAndGlyphs" stroke="#161616" stroke-width="0.2">12x12 Paper Pad—Christmas</text>
<text x="322.58" y="430.8" font-size="12" fill="#161616" textLength="24.32" lengthAdjust="spacingAndGlyphs" stroke="#161616" stroke-width="0.2">1979</text>
<text x="392.56" y="430.8" font-size="12" fill="#161616" textLength="27.34" lengthAdjust="spacingAndGlyphs" stroke="#161616" stroke-width="0.2">$9.41</text>
<text x="10.5" y="448.7" font-size="11" fill="#474747" text-anchor="middle" stroke="#474747" stroke-width="0.2">14</text>
<text x="23.7" y="448.7" font-size="11.6" fill="#161616" textLength="107.1" lengthAdjust="spacingAndGlyphs" stroke="#161616" stroke-width="0.2">Letter Dies—Bunny</text>
<text x="322.58" y="448.7" font-size="12" fill="#161616" textLength="24.32" lengthAdjust="spacingAndGlyphs" stroke="#161616" stroke-width="0.2">1395</text>
<text x="392.56" y="448.7" font-size="12" fill="#161616" textLength="27.34" lengthAdjust="spacingAndGlyphs" stroke="#161616" stroke-width="0.2">$7.57</text>
<text x="10.5" y="466.6" font-size="11" fill="#474747" text-anchor="middle" stroke="#474747" stroke-width="0.2">15</text>
<text x="23.7" y="466.6" font-size="11.6" fill="#161616" textLength="82.6" lengthAdjust="spacingAndGlyphs" stroke="#161616" stroke-width="0.2">Watercolor Set</text>
<text x="322.58" y="466.6" font-size="12" fill="#161616" textLength="24.32" lengthAdjust="spacingAndGlyphs" stroke="#161616" stroke-width="0.2">1743</text>
<text x="386.48" y="466.6" font-size="12" fill="#161616" textLength="33.42" lengthAdjust="spacingAndGlyphs" stroke="#161616" stroke-width="0.2">$13.42</text>
<text x="10.5" y="484.5" font-size="11" fill="#474747" text-anchor="middle" stroke="#474747" stroke-width="0.2">16</text>
<text x="23.7" y="484.5" font-size="11.6" fill="#161616" textLength="129.7" lengthAdjust="spacingAndGlyphs" stroke="#161616" stroke-width="0.2">Coloring Book—Garden</text>
<text x="322.58" y="484.5" font-size="12" fill="#161616" textLength="24.32" lengthAdjust="spacingAndGlyphs" stroke="#161616" stroke-width="0.2">1062</text>
<text x="392.56" y="484.5" font-size="12" fill="#161616" textLength="27.34" lengthAdjust="spacingAndGlyphs" stroke="#161616" stroke-width="0.2">$5.60</text>
<text x="10.5" y="502.4" font-size="11" fill="#474747" text-anchor="middle" stroke="#474747" stroke-width="0.2">17</text>
<text x="23.7" y="502.4" font-size="11.6" fill="#161616" textLength="122.1" lengthAdjust="spacingAndGlyphs" stroke="#161616" stroke-width="0.2">6x8 Paper Pad—Vacay</text>
<text x="328.66" y="502.4" font-size="12" fill="#161616" textLength="18.24" lengthAdjust="spacingAndGlyphs" stroke="#161616" stroke-width="0.2">424</text>
<text x="392.56" y="502.4" font-size="12" fill="#161616" textLength="27.34" lengthAdjust="spacingAndGlyphs" stroke="#161616" stroke-width="0.2">$3.15</text>
<text x="10.5" y="520.3" font-size="11" fill="#474747" text-anchor="middle" stroke="#474747" stroke-width="0.2">18</text>
<text x="23.7" y="520.3" font-size="11.6" fill="#161616" textLength="128.2" lengthAdjust="spacingAndGlyphs" stroke="#161616" stroke-width="0.2">Magnet Paper—Flower</text>
<text x="328.66" y="520.3" font-size="12" fill="#161616" textLength="18.24" lengthAdjust="spacingAndGlyphs" stroke="#161616" stroke-width="0.2">685</text>
<text x="392.56" y="520.3" font-size="12" fill="#161616" textLength="27.34" lengthAdjust="spacingAndGlyphs" stroke="#161616" stroke-width="0.2">$4.97</text>
<text x="10.5" y="538.2" font-size="11" fill="#474747" text-anchor="middle" stroke="#474747" stroke-width="0.2">19</text>
<text x="23.7" y="538.2" font-size="11.6" fill="#161616" textLength="180.1" lengthAdjust="spacingAndGlyphs" stroke="#161616" stroke-width="0.2">To-Do List Notepad—Craft Paper</text>
<text x="328.66" y="538.2" font-size="12" fill="#161616" textLength="18.24" lengthAdjust="spacingAndGlyphs" stroke="#161616" stroke-width="0.2">466</text>
<text x="392.56" y="538.2" font-size="12" fill="#161616" textLength="27.34" lengthAdjust="spacingAndGlyphs" stroke="#161616" stroke-width="0.2">$1.74</text>
<text x="10.5" y="556.1" font-size="11" fill="#474747" text-anchor="middle" stroke="#474747" stroke-width="0.2">20</text>
<text x="23.7" y="556.1" font-size="11.6" fill="#161616" textLength="179.5" lengthAdjust="spacingAndGlyphs" stroke="#161616" stroke-width="0.2">Small Embellishments—Carnival</text>
<text x="328.66" y="556.1" font-size="12" fill="#161616" textLength="18.24" lengthAdjust="spacingAndGlyphs" stroke="#161616" stroke-width="0.2">811</text>
<text x="392.56" y="556.1" font-size="12" fill="#161616" textLength="27.34" lengthAdjust="spacingAndGlyphs" stroke="#161616" stroke-width="0.2">$1.77</text>
<text x="10.5" y="574" font-size="11" fill="#474747" text-anchor="middle" stroke="#474747" stroke-width="0.2">21</text>
<text x="23.7" y="574" font-size="11.6" fill="#161616" textLength="129.7" lengthAdjust="spacingAndGlyphs" stroke="#161616" stroke-width="0.2">Adhesive Vinyl—White</text>
<text x="328.66" y="574" font-size="12" fill="#161616" textLength="18.24" lengthAdjust="spacingAndGlyphs" stroke="#161616" stroke-width="0.2">842</text>
<text x="392.56" y="574" font-size="12" fill="#161616" textLength="27.34" lengthAdjust="spacingAndGlyphs" stroke="#161616" stroke-width="0.2">$4.91</text>
</svg></body></html>
